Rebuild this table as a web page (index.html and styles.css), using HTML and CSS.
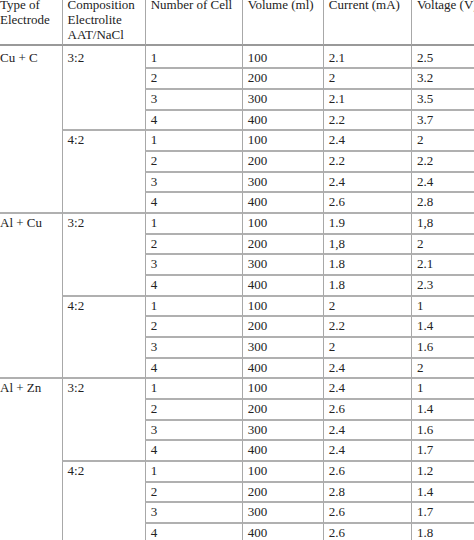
FILE: index.html
```html
<!DOCTYPE html>
<html>
<head>
<meta charset="utf-8">
<link rel="stylesheet" href="styles.css">
</head>
<body>
<table class="data">
  <colgroup>
    <col class="c1"><col class="c2"><col class="c3"><col class="c4"><col class="c5"><col class="c6">
  </colgroup>
  <thead>
    <tr>
      <th>Type of Electrode</th>
      <th>Composition Electrolite AAT/NaCl</th>
      <th>Number of Cell</th>
      <th>Volume (ml)</th>
      <th>Current (mA)</th>
      <th>Voltage (V)</th>
    </tr>
  </thead>
  <tbody>
    <tr class="first"><td rowspan="8">Cu + C</td><td rowspan="4">3:2</td><td>1</td><td>100</td><td>2.1</td><td>2.5</td></tr>
    <tr><td>2</td><td>200</td><td>2</td><td>3.2</td></tr>
    <tr><td>3</td><td>300</td><td>2.1</td><td>3.5</td></tr>
    <tr><td>4</td><td>400</td><td>2.2</td><td>3.7</td></tr>
    <tr><td rowspan="4">4:2</td><td>1</td><td>100</td><td>2.4</td><td>2</td></tr>
    <tr><td>2</td><td>200</td><td>2.2</td><td>2.2</td></tr>
    <tr><td>3</td><td>300</td><td>2.4</td><td>2.4</td></tr>
    <tr><td>4</td><td>400</td><td>2.6</td><td>2.8</td></tr>

    <tr><td rowspan="8">Al + Cu</td><td rowspan="4">3:2</td><td>1</td><td>100</td><td>1.9</td><td>1,8</td></tr>
    <tr><td>2</td><td>200</td><td>1,8</td><td>2</td></tr>
    <tr><td>3</td><td>300</td><td>1.8</td><td>2.1</td></tr>
    <tr><td>4</td><td>400</td><td>1.8</td><td>2.3</td></tr>
    <tr><td rowspan="4">4:2</td><td>1</td><td>100</td><td>2</td><td>1</td></tr>
    <tr><td>2</td><td>200</td><td>2.2</td><td>1.4</td></tr>
    <tr><td>3</td><td>300</td><td>2</td><td>1.6</td></tr>
    <tr><td>4</td><td>400</td><td>2.4</td><td>2</td></tr>

    <tr><td rowspan="8">Al + Zn</td><td rowspan="4">3:2</td><td>1</td><td>100</td><td>2.4</td><td>1</td></tr>
    <tr><td>2</td><td>200</td><td>2.6</td><td>1.4</td></tr>
    <tr><td>3</td><td>300</td><td>2.4</td><td>1.6</td></tr>
    <tr><td>4</td><td>400</td><td>2.4</td><td>1.7</td></tr>
    <tr><td rowspan="4">4:2</td><td>1</td><td>100</td><td>2.6</td><td>1.2</td></tr>
    <tr><td>2</td><td>200</td><td>2.8</td><td>1.4</td></tr>
    <tr><td>3</td><td>300</td><td>2.6</td><td>1.7</td></tr>
    <tr><td>4</td><td>400</td><td>2.6</td><td>1.8</td></tr>
  </tbody>
</table>
</body>
</html>
```

FILE: styles.css
```css
html, body {
  margin: 0;
  padding: 0;
  background: #ffffff;
  overflow: hidden;
}

.data {
  border-collapse: separate;
  border-spacing: 0;
  table-layout: fixed;
  width: 496px;
  margin: -3px 0 0 -5px;
  font-family: "Liberation Serif", "Times New Roman", serif;
  font-size: 13px;
  line-height: 15px;
  color: #222222;
}

.c1 { width: 66.5px; }
.c2 { width: 83px; }
.c3 { width: 97px; }
.c4 { width: 81px; }
.c5 { width: 88px; }
.c6 { width: 80px; }

.data th,
.data td {
  text-align: left;
  vertical-align: top;
  font-weight: normal;
  border-left: 1px solid #a8a8a8;
}

.data th {
  padding: 0 5px 2px 5px;
  border-bottom: 2px solid #999999;
}

.data td {
  padding: 1px 5px 3px 5px;
  border-bottom: 2px solid #b0b0b0;
}

.data tbody tr:nth-child(3n+1) td {
  padding-bottom: 2px;
}

.data tr.first td {
  padding-top: 4px;
  padding-bottom: 1px;
}

.data th:first-child,
.data td[rowspan="8"] {
  border-left: none;
}
```
